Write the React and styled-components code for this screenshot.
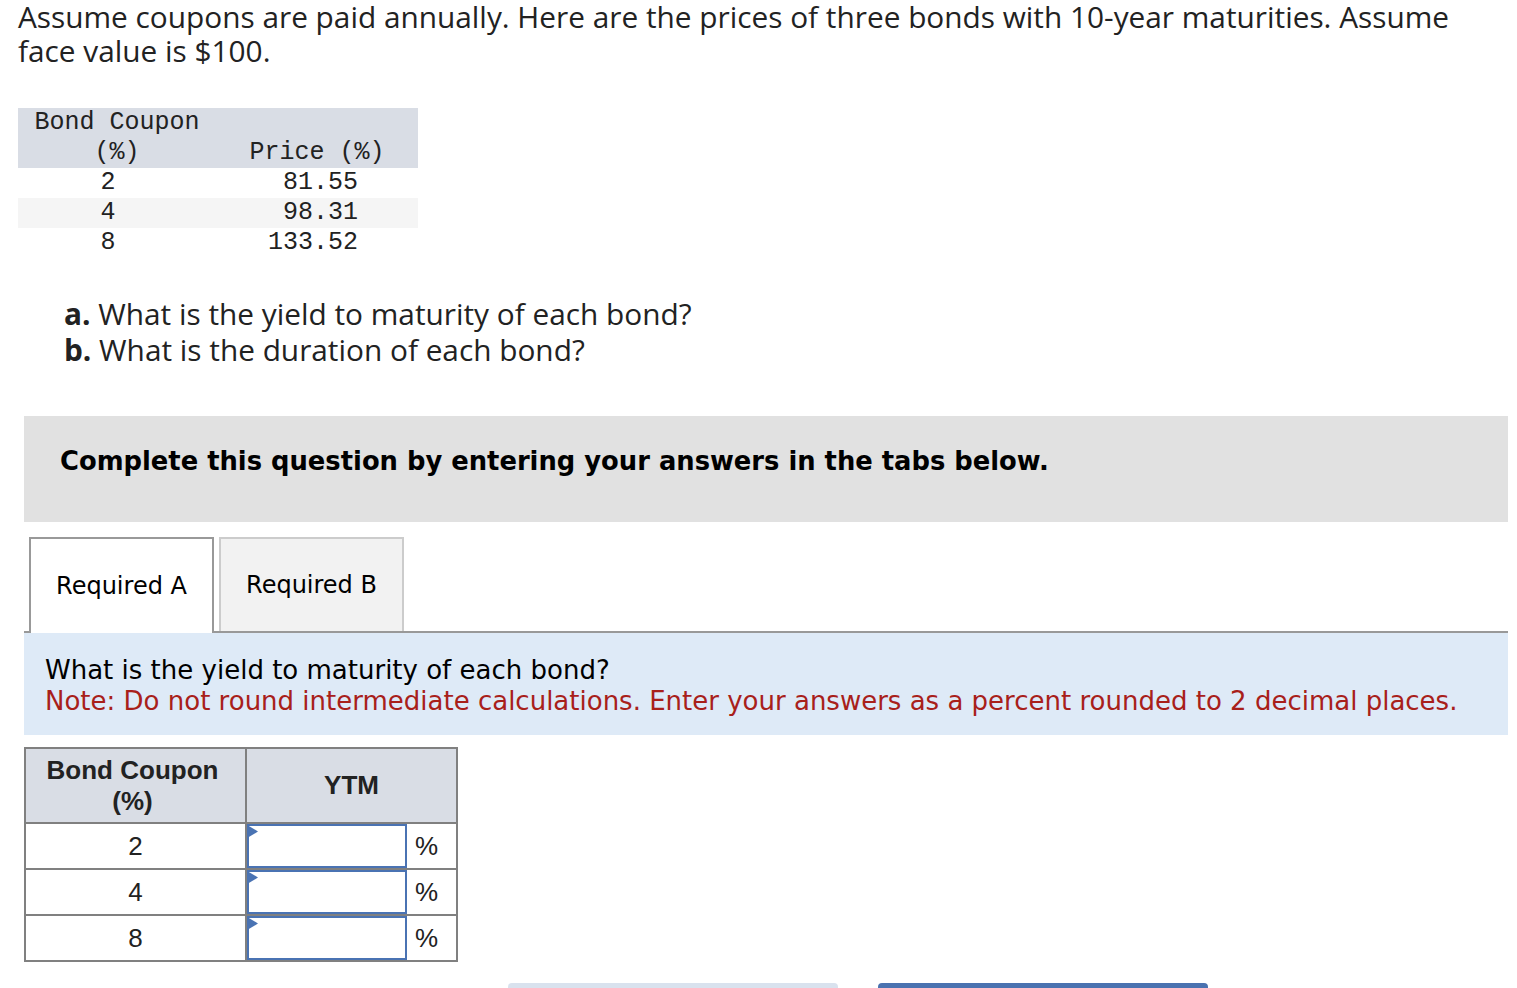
import React from 'react';
import styled, { createGlobalStyle } from 'styled-components';

const GlobalStyle = createGlobalStyle`
  body {
    margin: 0;
    background: #fff;
    font-family: 'Open Sans', 'Liberation Sans', sans-serif;
    color: #222;
  }
`;

const bonds = [
  { coupon: '2', price: '81.55' },
  { coupon: '4', price: '98.31' },
  { coupon: '8', price: '133.52' },
];

export default function App() {
  return (
    <Page>
      <GlobalStyle />
      <Intro>
        Assume coupons are paid annually. Here are the prices of three bonds with 10-year maturities. Assume
        face value is $100.
      </Intro>

      <MonoTable>
        <MonoHead>
          <span>Bond Coupon (%)</span>
          <span>Price (%)</span>
        </MonoHead>
        {bonds.map((b, i) => (
          <MonoRow key={b.coupon} shaded={i === 1}>
            <span>{b.coupon}</span>
            <span>{b.price}</span>
          </MonoRow>
        ))}
      </MonoTable>

      <Questions>
        <div><b>a.</b> What is the yield to maturity of each bond?</div>
        <div><b>b.</b> What is the duration of each bond?</div>
      </Questions>

      <Banner>Complete this question by entering your answers in the tabs below.</Banner>

      <Tabs>
        <Tab active>Required A</Tab>
        <Tab>Required B</Tab>
      </Tabs>

      <Prompt>
        <div>What is the yield to maturity of each bond?</div>
        <Note>Note: Do not round intermediate calculations. Enter your answers as a percent rounded to 2 decimal places.</Note>
      </Prompt>

      <AnswerTable>
        <thead>
          <tr>
            <Th>Bond Coupon<br />(%)</Th>
            <Th colSpan={2}>YTM</Th>
          </tr>
        </thead>
        <tbody>
          {bonds.map((b) => (
            <tr key={b.coupon}>
              <Td>{b.coupon}</Td>
              <InputCell>
                <InputBox>
                  <Marker viewBox="0 0 10 12"><path d="M0 0 L10 6 L0 12 Z" /></Marker>
                </InputBox>
              </InputCell>
              <PctCell>%</PctCell>
            </tr>
          ))}
        </tbody>
      </AnswerTable>

      <Buttons>
        <NavButton />
        <NavButton primary />
      </Buttons>
    </Page>
  );
}

const Page = styled.div`
  padding: 0 9px 0 18px;
  height: 988px;
  overflow: hidden;
`;

const Intro = styled.p`
  margin: 0;
  font-size: 29.8px;
  line-height: 34px;
  width: 1460px;
`;

const MonoTable = styled.div`
  margin-top: 40px;
  width: 400px;
  font-family: 'Liberation Mono', monospace;
  font-size: 25px;
  color: #222;
`;

const MonoHead = styled.div`
  display: grid;
  grid-template-columns: 198px 202px;
  background: #d9dde5;
  line-height: 30px;
  span {
    text-align: center;
    align-self: end;
  }
`;

const MonoRow = styled.div`
  display: grid;
  grid-template-columns: 180px 160px;
  line-height: 30px;
  background: ${(p) => (p.shaded ? '#f5f5f5' : 'transparent')};
  span:first-child {
    text-align: center;
  }
  span:last-child {
    text-align: right;
  }
`;

const Questions = styled.div`
  margin: 38px 0 0 46px;
  font-size: 29.8px;
  line-height: 36px;
  b {
    font-weight: 700;
  }
`;

const Banner = styled.div`
  margin: 48px 0 0 6px;
  width: 1484px;
  height: 106px;
  box-sizing: border-box;
  padding: 30px 36px 0;
  line-height: 30px;
  background: #e1e1e1;
  color: #000;
  font-family: 'DejaVu Sans', sans-serif;
  font-weight: 700;
  font-size: 25.8px;
`;

const Tabs = styled.div`
  margin: 15px 0 0 6px;
  width: 1484px;
  display: flex;
  gap: 5px;
  padding-left: 5px;
  box-sizing: border-box;
  border-bottom: 2px solid #999;
  height: 96px;
`;

const Tab = styled.div`
  width: 185px;
  height: ${(p) => (p.active ? '96px' : '94px')};
  box-sizing: border-box;
  display: flex;
  align-items: center;
  justify-content: center;
  background: ${(p) => (p.active ? '#fff' : '#f2f2f2')};
  border: 2px solid ${(p) => (p.active ? '#999' : '#ccc')};
  border-bottom: none;
  font-family: 'DejaVu Sans', sans-serif;
  font-size: 24px;
  color: #000;
  margin-bottom: ${(p) => (p.active ? '-2px' : '0')};
`;

const Prompt = styled.div`
  margin-left: 6px;
  width: 1484px;
  height: 102px;
  box-sizing: border-box;
  padding: 22px 21px 0;
  background: #deeaf7;
  font-family: 'DejaVu Sans', sans-serif;
  font-size: 26px;
  line-height: 31px;
  color: #000;
`;

const Note = styled.div`
  color: #a8201a;
`;

const AnswerTable = styled.table`
  margin: 12px 0 0 6px;
  border-collapse: collapse;
  font-family: 'Liberation Sans', Arial, sans-serif;
  font-size: 26px;
  color: #222;
`;

const Th = styled.th`
  background: #d9dde5;
  border: 2px solid #808080;
  height: 73px;
  padding: 0;
  font-weight: 700;
  line-height: 31px;
  &:first-child {
    width: 213px;
    padding-right: 6px;
  }
`;

const Td = styled.td`
  border: 2px solid #808080;
  height: 42px;
  padding: 0;
  text-align: center;
`;

const InputCell = styled.td`
  border: 2px solid #808080;
  border-right: none;
  padding: 0;
  width: 160px;
  height: 42px;
`;

const InputBox = styled.div`
  position: relative;
  width: 160px;
  height: 44px;
  box-sizing: border-box;
  border: 2px solid #4a73b3;
  background: #fff;
`;

const Marker = styled.svg`
  position: absolute;
  top: -1px;
  left: -1px;
  width: 10px;
  height: 13px;
  fill: #4a73b3;
`;

const PctCell = styled.td`
  border: 2px solid #808080;
  border-left: none;
  padding: 0 0 0 8px;
  width: 41px;
  text-align: left;
`;

const Buttons = styled.div`
  margin: 21px 0 0 490px;
  display: flex;
  gap: 40px;
`;

const NavButton = styled.div`
  width: 330px;
  height: 40px;
  border-radius: 4px;
  background: ${(p) => (p.primary ? '#4a72b0' : '#d9e2ee')};
`;
